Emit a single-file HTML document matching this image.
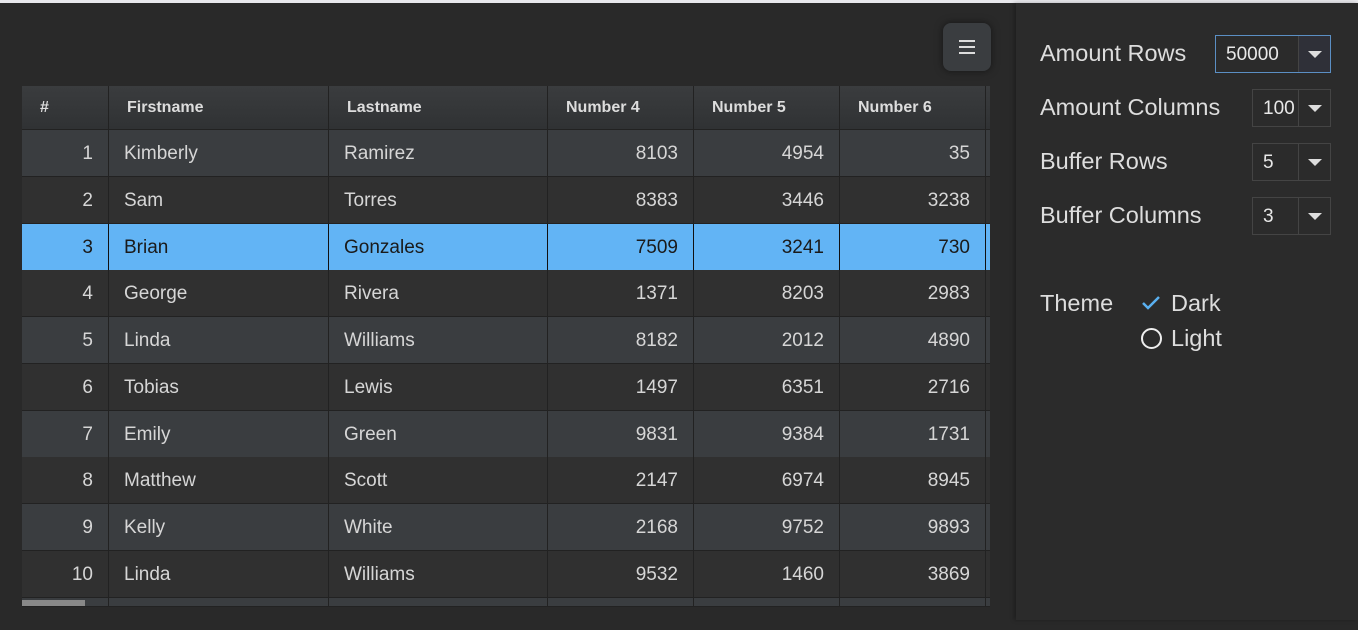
<!DOCTYPE html>
<html><head><style>
*{margin:0;padding:0;box-sizing:border-box}
body{width:1358px;height:630px;background:#292929;font-family:"Liberation Sans",sans-serif;position:relative;overflow:hidden}
.top{position:absolute;left:0;top:0;width:1358px;height:3px;background:#e8e8ec}
.panel{position:absolute;left:1016px;top:3px;width:342px;height:617px;background:#2b2b2b;box-shadow:-2px 0 4px rgba(0,0,0,.25)}
.menu{position:absolute;left:943px;top:23px;width:48px;height:48px;border-radius:8px;background:#3a3d40;box-shadow:0 0 8px rgba(0,0,0,.5)}
.menu i{position:absolute;left:16px;width:16px;height:2px;background:#ddd}
.r{position:absolute;left:22px;width:968px;height:46px;border-bottom:1px solid #222}
.c{position:absolute;top:0;height:100%;border-right:1px solid #222;color:#d6d6d6;font-size:19px;line-height:48px;white-space:nowrap}
.hd .c{font-weight:bold;font-size:16px;color:#ddd;line-height:44px;padding-left:18px}
.num{text-align:right;padding-right:15px}
.txt{padding-left:15px}
.sel .c{color:#1a1a1a;border-right:1px solid #111}
.lbl{position:absolute;left:1040px;color:#ddd;font-size:23.5px}
.sb{position:absolute;border:1px solid #444;height:38px;color:#e8e8e8;font-size:19px;line-height:38px;padding-left:10px}
.sb .ar{position:absolute;right:0;top:0;width:32px;height:100%;border-left:1px solid #444}
.sb .ar:after{content:"";position:absolute;left:9px;top:15px;border-left:7px solid transparent;border-right:7px solid transparent;border-top:7px solid #ddd}
</style></head><body>
<div class="top"></div>
<div class="panel"></div>
<div class="menu"><i style="top:17px"></i><i style="top:23px"></i><i style="top:29px"></i></div>

<div class="r hd" style="top:86px;height:44px;background:linear-gradient(#3a3c3e,#303234)">
<div class="c" style="left:0;width:87px">#</div><div class="c" style="left:87px;width:220px">Firstname</div><div class="c" style="left:307px;width:219px">Lastname</div><div class="c" style="left:526px;width:146px">Number 4</div><div class="c" style="left:672px;width:146px">Number 5</div><div class="c" style="left:818px;width:146px">Number 6</div>
</div>

<div id="rows"></div>
<script>
var d=[[1,"Kimberly","Ramirez",8103,4954,35],[2,"Sam","Torres",8383,3446,3238],[3,"Brian","Gonzales",7509,3241,730],[4,"George","Rivera",1371,8203,2983],[5,"Linda","Williams",8182,2012,4890],[6,"Tobias","Lewis",1497,6351,2716],[7,"Emily","Green",9831,9384,1731],[8,"Matthew","Scott",2147,6974,8945],[9,"Kelly","White",2168,9752,9893],[10,"Linda","Williams",9532,1460,3869],["","","","","",""]];
var h="";
d.forEach(function(r,i){
var top=130+i*46.75;var bg=i==2?"#62b4f5":(i%2==0?"#3a3d40":"#303030");
var ht=i==10?9:47;
h+='<div class="r'+(i==2?' sel':'')+'" style="top:'+top+'px;height:'+ht+'px;background:'+bg+'">'+
'<div class="c num" style="left:0;width:87px">'+r[0]+'</div>'+
'<div class="c txt" style="left:87px;width:220px">'+r[1]+'</div>'+
'<div class="c txt" style="left:307px;width:219px">'+r[2]+'</div>'+
'<div class="c num" style="left:526px;width:146px">'+r[3]+'</div>'+
'<div class="c num" style="left:672px;width:146px">'+r[4]+'</div>'+
'<div class="c num" style="left:818px;width:146px">'+r[5]+'</div></div>';
});
document.getElementById("rows").innerHTML=h;
</script>
<div style="position:absolute;left:22px;top:600px;width:63px;height:6px;background:#888"></div>

<div class="lbl" style="top:40px">Amount Rows</div>
<div class="sb" style="left:1215px;top:35px;width:116px;border-color:#5b8fc4">50000<div class="ar" style="background:#2f3038;border-left-color:#444"></div></div>
<div class="lbl" style="top:94px">Amount Columns</div>
<div class="sb" style="left:1252px;top:89px;width:79px">100<div class="ar"></div></div>
<div class="lbl" style="top:148px">Buffer Rows</div>
<div class="sb" style="left:1252px;top:143px;width:79px">5<div class="ar"></div></div>
<div class="lbl" style="top:202px">Buffer Columns</div>
<div class="sb" style="left:1252px;top:197px;width:79px">3<div class="ar"></div></div>

<div class="lbl" style="top:290px">Theme</div>
<svg style="position:absolute;left:1141px;top:294px" width="20" height="18"><path d="M2 9 L7 14 L18 3" stroke="#5ab0f0" stroke-width="2.5" fill="none"/></svg>
<div class="lbl" style="left:1171px;top:290px">Dark</div>
<div style="position:absolute;left:1141px;top:328px;width:21px;height:21px;border:2px solid #eee;border-radius:50%"></div>
<div class="lbl" style="left:1171px;top:325px">Light</div>
</body></html>
